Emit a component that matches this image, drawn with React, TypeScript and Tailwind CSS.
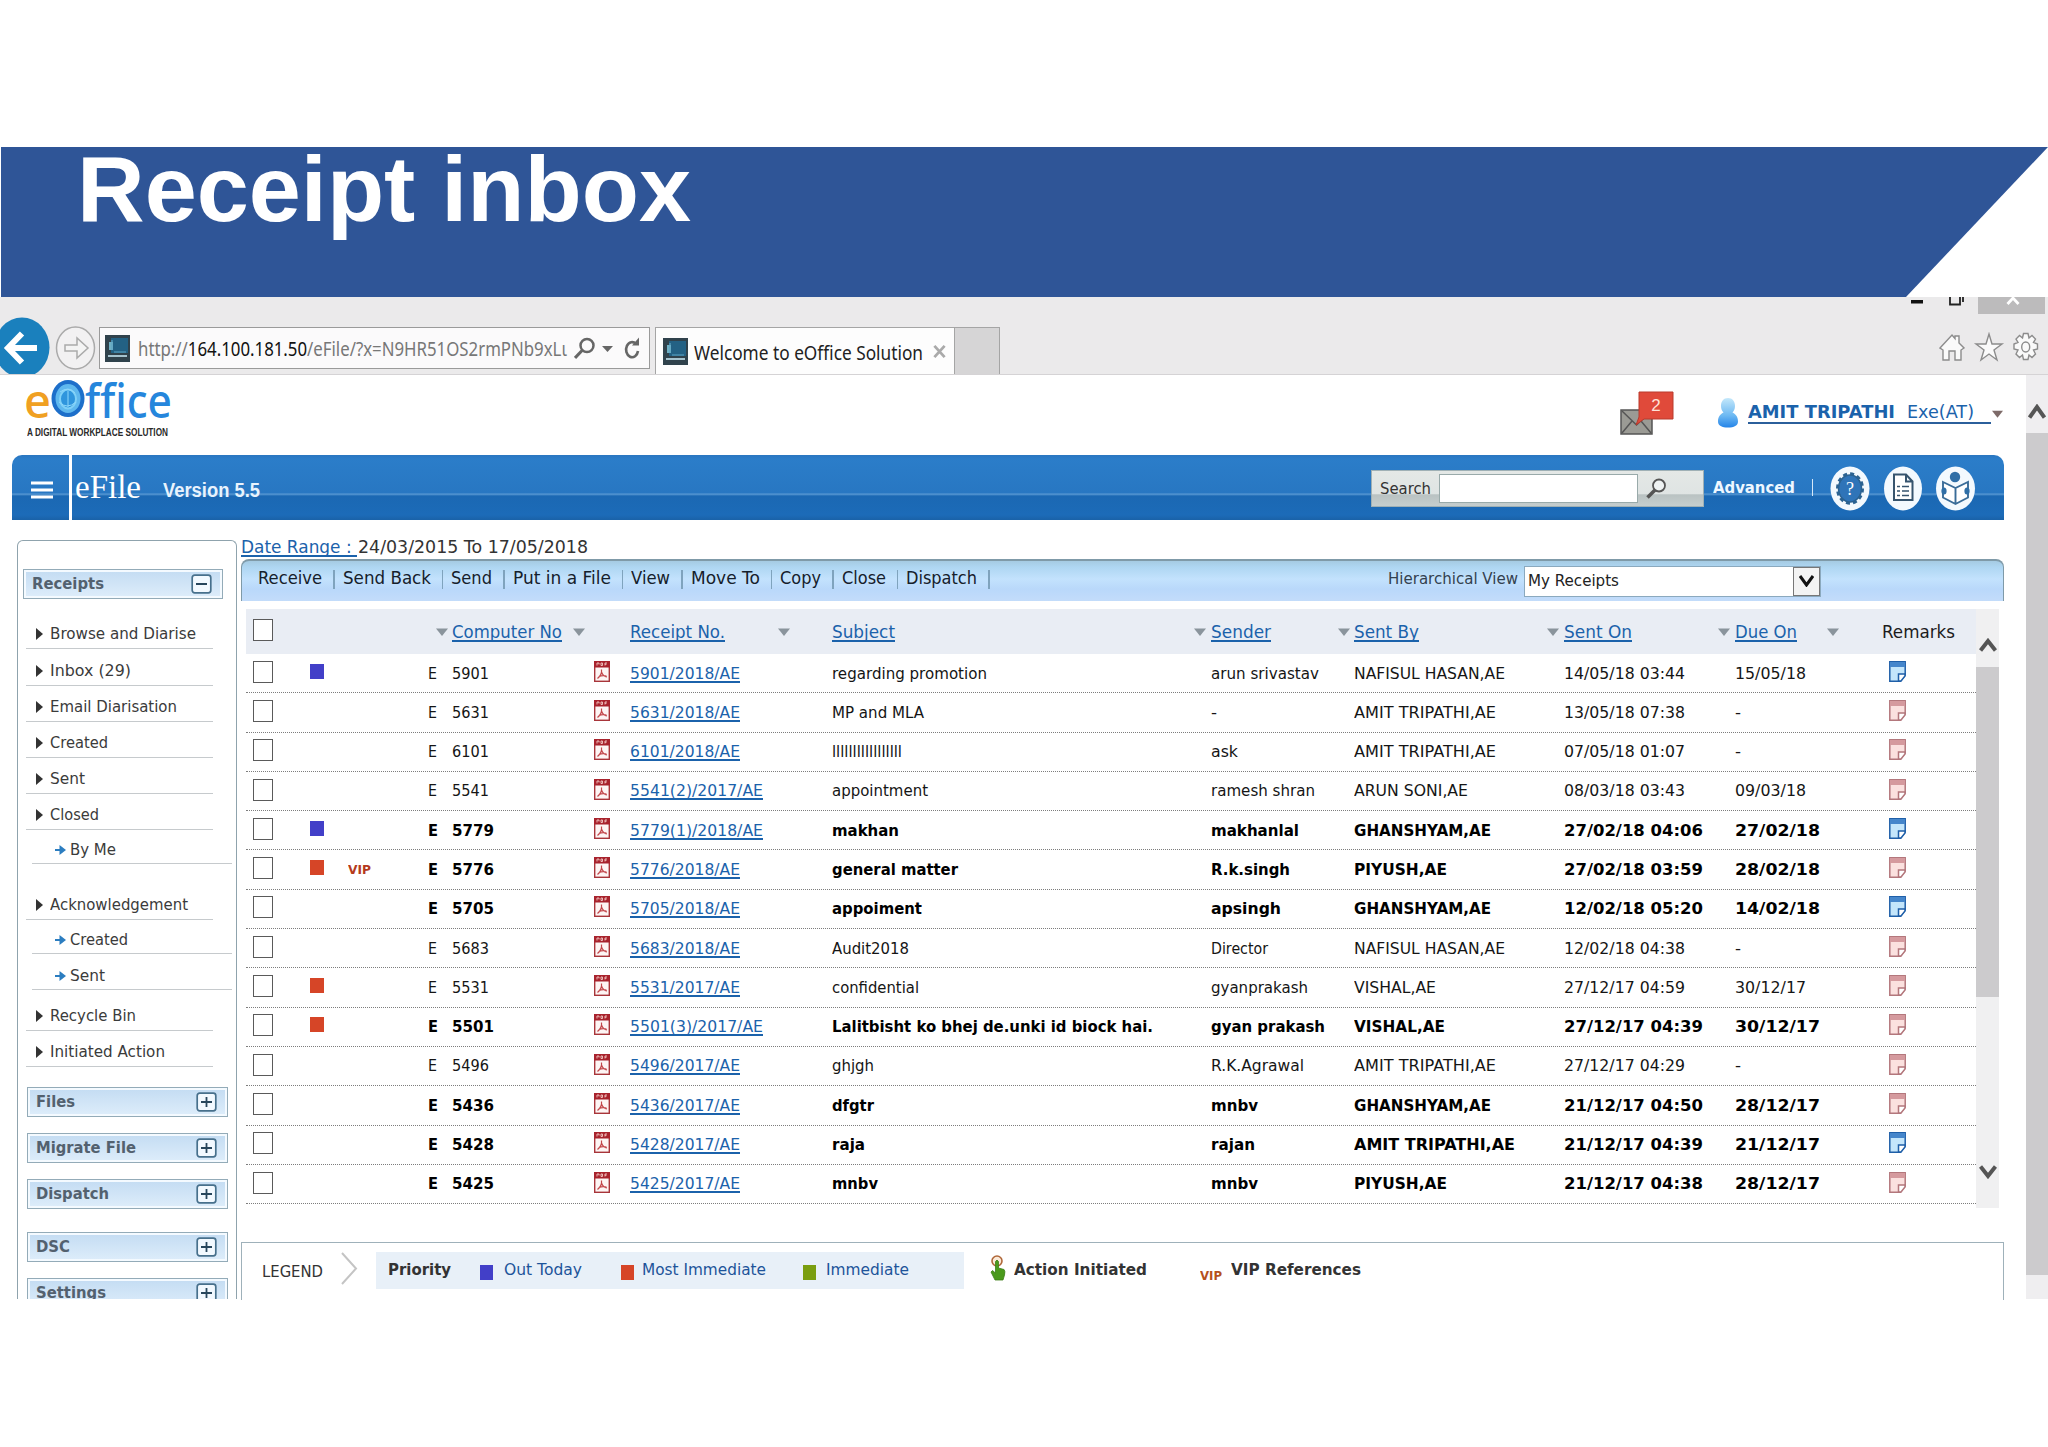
import React, { useLayoutEffect, useRef, useState } from "react";

/** Text squeezed or stretched horizontally so that it takes exactly `w` pixels. */
function Fit({ w, link = false, className = "", children }: { w: number; link?: boolean; className?: string; children: React.ReactNode }) {
  const ref = useRef<HTMLSpanElement>(null);
  const [scale, setScale] = useState(1);
  useLayoutEffect(() => {
    if (ref.current && ref.current.offsetWidth) setScale(w / ref.current.getBoundingClientRect().width);
  }, [w]);
  return (
    <span className={"inline-block shrink-0 whitespace-nowrap " + className} style={{ width: w }}>
      <span ref={ref} className={"inline-block origin-left whitespace-pre " + (link ? LINK : "")} style={{ transform: `scaleX(${scale})` }}>
        {children}
      </span>
    </span>
  );
}

const LINK = "text-[#1b62ab] underline underline-offset-[2px] decoration-[1.5px] [text-decoration-skip-ink:none]";

function Caret({ className = "" }: { className?: string }) {
  return (
    <svg className={"h-[8px] w-[12px] shrink-0 " + className} viewBox="0 0 12 8">
      <path d="M0 0.5H12L6 8Z" fill="#8a949c" />
    </svg>
  );
}

function Favicon() {
  return (
    <svg className="h-[27px] w-[25px] shrink-0" viewBox="0 0 25 27">
      <rect width="25" height="27" fill="#30424c" />
      <rect x="6" y="3" width="17" height="15" fill="#236184" />
      <rect x="4" y="7" width="4" height="8" fill="#6fb0c4" />
      <path d="M7 5v10M9 17h12" stroke="#5fa5c4" strokeWidth="1.2" />
      <rect x="3" y="20" width="19" height="2" fill="#a5c3cf" />
    </svg>
  );
}

function Banner() {
  return (
    <div className="ml-px mt-[147px] h-[150px] shrink-0 bg-[#2f5597] pl-[76px] [clip-path:polygon(0_0,100%_0,1905px_100%,0_100%)]">
      <div className="-mt-[11px] font-['Liberation_Sans',sans-serif] text-[93px] font-bold leading-[107px] text-white">
        <Fit w={614}>Receipt inbox</Fit>
      </div>
    </div>
  );
}

function BrowserBar() {
  return (
    <div className="flex h-[78px] shrink-0 overflow-hidden border-b border-[#d5d3d5] bg-[#ebeaeb] font-['Noto_Sans',sans-serif]">
      <svg className="h-[77px] w-[99px] shrink-0" viewBox="0 0 99 77">
        <ellipse cx="22" cy="50.500" rx="27.500" ry="30" fill="#1a80bd" />
        <path d="M37 51H9M22 36.500L8 51L22 65.500" fill="none" stroke="#fff" strokeWidth="6" />
        <ellipse cx="75.500" cy="51" rx="19" ry="21" fill="#f2f1f2" stroke="#aaa" strokeWidth="1.500" />
        <path d="M65 48h12v-7l11 10l-11 10v-7h-12z" fill="#f4f4f4" stroke="#aaa" strokeWidth="1.500" />
      </svg>
      <div className="mt-[30px] flex h-[42px] w-[551px] shrink-0 items-center border border-[#9a9a9a] bg-[#fbfafb] pl-[5px]">
        <Favicon />
        <div className="ml-[8px] mt-[2px] text-[19px] text-[#777]">
          <Fit w={429}>
            http://<span className="text-[#111]">164.100.181.50</span>/eFile/?x=N9HR51OS2rmPNb9xLι
          </Fit>
        </div>
        <svg className="ml-[7px] mt-[2px] h-[26px] w-[70px] shrink-0" viewBox="0 0 70 26">
          <circle cx="13" cy="9.500" r="6.500" fill="none" stroke="#666" strokeWidth="2.500" />
          <path d="M8.500 14L1 22" stroke="#666" strokeWidth="3" />
          <path d="M28 10H39L33.500 16Z" fill="#666" />
          <path d="M62 8A6 7.500 0 1 0 64 15" fill="none" stroke="#666" strokeWidth="2.600" />
          <path d="M58 9.500H65V1.500Z" fill="#666" />
        </svg>
      </div>
      <div className="ml-[5px] mt-[30px] flex h-[48px] w-[300px] shrink-0 items-center border border-b-0 border-[#a5a5a5] bg-[#fdfdfd] pl-[7px]">
        <Favicon />
        <Fit w={229} className="ml-[6px] mt-[3px] text-[19px] text-[#222]">Welcome to eOffice Solution</Fit>
        <svg className="ml-[10px] h-[13px] w-[13px]" viewBox="0 0 13 14">
          <path d="M1 1L12 13M12 1L1 13" stroke="#aaa" strokeWidth="3" />
        </svg>
      </div>
      <div className="mt-[30px] h-[48px] w-[45px] shrink-0 border border-l-0 border-[#a5a5a5] bg-[#d6d5d6]" />
      <div className="ml-auto flex w-[140px] flex-col">
        <svg className="h-[17px] w-[140px]" viewBox="0 0 140 17">
          <rect x="3" y="3" width="12" height="3.500" fill="#111" />
          <path d="M42 0V7.500H52V0M55 0V5" fill="none" stroke="#222" strokeWidth="1.800" />
          <rect x="70" y="0" width="67" height="17" fill="#bcbbbc" />
          <path d="M99.500 7L105 1L110.500 7" fill="none" stroke="#fff" strokeWidth="2.800" />
        </svg>
        <svg className="mt-[18px] h-[32px] w-[140px]" viewBox="0 0 140 32" fill="#fafafa" stroke="#8c8c8c" strokeWidth="1.400">
          <path d="M32 16L44 3L47 6.500V4H51V11L56 16L53 18V28H47V19H41V28H35V18Z" />
          <path d="M81 2L84 12H94L86 18L89 28L81 22L73 28L76 18L68 12H78Z" />
          <path d="M115.500 1.500h4.500l1 4.500l3-2.500l3.500 3.500l-2 3.500l4 1.500v5l-4 1l2 4l-3.500 3.500l-3-2.500l-1 4.500h-4.500l-1-4.500l-3 2.500l-3.500-3.500l2-4l-4-1v-5l4-1.500l-2-3.500l3.500-3.500l3 2.500z" />
          <ellipse cx="117.700" cy="15" rx="4" ry="5" />
        </svg>
      </div>
    </div>
  );
}

function Logo() {
  return (
    <div className="ml-[24px] flex w-[150px] shrink-0 flex-col">
      <div className="flex h-[48px] items-start font-['Noto_Sans',sans-serif] text-[47px] leading-[50px]">
        <Fit w={27} className="font-medium text-[#f0a022]">e</Fit>
        <svg className="mt-[5px] h-[37px] w-[34px] shrink-0" viewBox="0 0 34 37">
          <ellipse cx="17" cy="18.500" rx="14.500" ry="16.500" fill="#5fb8ee" stroke="#1d6fca" strokeWidth="4" />
          <ellipse cx="17" cy="19" rx="8" ry="9.500" fill="#2f95dd" stroke="#7fd0f7" strokeWidth="2" />
          <path d="M9 12q8-6 15 1M8 22q8 8 17 0M17 11v16" fill="none" stroke="#8fd8fb" strokeWidth="1" />
        </svg>
        <Fit w={87} className="font-medium text-[#2586dc]">ffice</Fit>
      </div>
      <div className="ml-[3px] mt-[2px] font-['Liberation_Sans',sans-serif] text-[10.5px] font-bold leading-[14px] text-[#2a2a2a]">
        <Fit w={141}>A DIGITAL WORKPLACE SOLUTION</Fit>
      </div>
    </div>
  );
}

function TopStrip() {
  return (
    <div className="flex h-[80px] shrink-0">
      <Logo />
      <svg className="ml-auto mt-[16px] h-[44px] w-[54px] shrink-0" viewBox="0 0 54 44">
        <rect x="1" y="19" width="31" height="24" fill="#9b9b95" stroke="#555" strokeWidth="1.500" />
        <path d="M2 20L16.500 34L31 20M2 42L12 30M31 42L21 30" fill="none" stroke="#555" strokeWidth="1.500" />
        <path d="M19 1H53V28H24L16 34L19 26Z" fill="#e04a3a" stroke="#b93a2c" />
        <text x="36" y="20" textAnchor="middle" fontSize="17" fontFamily="Liberation Sans, sans-serif" fill="#ffe3d8">2</text>
      </svg>
      <svg className="ml-[43px] mt-[22px] h-[32px] w-[22px] shrink-0" viewBox="0 0 22 32">
        <defs>
          <linearGradient id="person" x1="0" y1="0" x2="0" y2="1">
            <stop offset="0" stopColor="#c4e8fb" />
            <stop offset=".6" stopColor="#6cb8f2" />
            <stop offset="1" stopColor="#2584e8" />
          </linearGradient>
        </defs>
        <path d="M11 1c4.500 0 7 3.500 7 8c0 3-1 5-2.500 6.500c4 2 5.500 5 5.500 9c0 4-4 6-10 6s-10-2-10-6c0-4 1.500-7 5.500-9C5 14 4 12 4 9c0-4.500 2.500-8 7-8z" fill="url(#person)" />
      </svg>
      <div className="ml-[9px] mt-[25px] flex h-[24px] w-[243px] shrink-0 items-end border-b-2 border-[#2b5f9b] font-['DejaVu_Sans',sans-serif] text-[17px] leading-[20px] text-[#1b62ab]">
        <Fit w={147} className="font-bold">AMIT TRIPATHI</Fit>
        <Fit w={67} className="ml-[12px]">Exe(AT)</Fit>
      </div>
      <svg className="ml-px mr-[23px] mt-[35px] h-[8px] w-[11px] shrink-0" viewBox="0 0 12 8"><path d="M0 .5H12L6 8Z" fill="#7d6a68" /></svg>
    </div>
  );
}

function EFileBar() {
  return (
    <div className="ml-[12px] flex h-[65px] w-[1992px] shrink-0 items-center rounded-t-[10px] bg-[linear-gradient(to_bottom,#2a76c0_0,#2b7dc9_4px,#2877c2_38px,#5c9bd5_39px,#1b68b3_41px,#1c6bb8_60px,#1a62a8_100%)]">
      <svg className="ml-[19px] mt-[5px] h-[18px] w-[22px] shrink-0" viewBox="0 0 22 18">
        <path d="M0 2H22M0 9H22M0 16H22" stroke="#fff" strokeWidth="3.200" />
      </svg>
      <div className="ml-[16px] h-full w-[3px] shrink-0 bg-white" />
      <div className="ml-[3px] font-['Liberation_Serif',serif] text-[33px] text-white">
        <Fit w={66}>eFile</Fit>
      </div>
      <div className="ml-[22px] mt-[4px] font-['Liberation_Sans',sans-serif] text-[20px] font-bold text-[#e8f3fd]">
        <Fit w={97}>Version 5.5</Fit>
      </div>
      <div className="ml-auto mt-[2px] flex h-[37px] w-[333px] shrink-0 items-center border border-[#9fb0b5] bg-[linear-gradient(to_bottom,#e4e8e6,#dfe4e3_65%,#b9c2c2_68%,#c6cece)] pl-[8px] font-['DejaVu_Sans',sans-serif] text-[16px] text-[#333]">
        <Fit w={51}>Search</Fit>
        <div className="ml-[8px] h-[29px] w-[199px] shrink-0 border border-[#9aa] bg-white" />
        <svg className="ml-[8px] h-[22px] w-[21px]" viewBox="0 0 21 22">
          <circle cx="13" cy="7.500" r="6" fill="#eef2f2" stroke="#555" strokeWidth="1.800" />
          <path d="M9 12L1.500 19.500" stroke="#555" strokeWidth="3.500" />
        </svg>
      </div>
      <div className="ml-[9px] mt-[1px] font-['DejaVu_Sans',sans-serif] text-[16px] font-bold text-[#eef7ff]">
        <Fit w={82}>Advanced</Fit>
      </div>
      <div className="ml-[17px] mr-[17px] h-[17px] w-[1.5px] bg-[#d5e8f8]" />
      <svg className="mr-[26px] mt-[2px] h-[46px] w-[148px] shrink-0" viewBox="0 0 148 46">
        <g fill="#f3f9fe">
          <ellipse cx="20" cy="22.500" rx="19.500" ry="22" />
          <ellipse cx="73" cy="22.500" rx="19" ry="22" />
          <ellipse cx="125.500" cy="22.500" rx="19.500" ry="22" />
        </g>
        <ellipse cx="20" cy="22.500" rx="11.500" ry="13.500" fill="#2f74b8" stroke="#2b6291" strokeWidth="1.500" />
        <ellipse cx="20" cy="22.500" rx="12.500" ry="14.700" fill="none" stroke="#2b6291" strokeWidth="3" strokeDasharray="4 3.100" />
        <text x="20" y="29" textAnchor="middle" fontSize="18" fontFamily="Liberation Serif, serif" fill="#fff">?</text>
        <path d="M64 8.500H76L82.500 15.500V34H64Z M76 8.500V15.500H82.500" fill="#fff" stroke="#36546e" strokeWidth="2" />
        <path d="M67 20.500H70M72 20.500H79M67 25H70M72 25H79M67 29.500H70M72 29.500H79" stroke="#36546e" strokeWidth="1.600" />
        <circle cx="125" cy="11" r="5.200" fill="#2f6ea6" />
        <path d="M113 16L125.500 22L138 16V31.500L125.500 38L113 31.500ZM125.500 22V38" fill="#fff" stroke="#3a6c98" strokeWidth="1.900" />
        <ellipse cx="114" cy="25" rx="2.600" ry="3.500" fill="#2f6ea6" />
        <ellipse cx="137" cy="25" rx="2.600" ry="3.500" fill="#2f6ea6" />
      </svg>
    </div>
  );
}

function SectionHeader({ label, w, open = false, className = "" }: { label: string; w: number; open?: boolean; className?: string }) {
  return (
    <div className={"flex h-[30px] shrink-0 items-center justify-between border border-[#93abb8] bg-[#f4faff] p-[2px] " + className}>
      <div className="flex h-full w-full items-center justify-between bg-[linear-gradient(to_bottom,#c5ddf3,#dcecfa)] pl-[6px] pr-[8px] font-['DejaVu_Sans',sans-serif] text-[15.5px] font-bold text-[#53616f]">
        <Fit w={w} className="mt-[1px]">{label}</Fit>
        <svg className="h-[20px] w-[21px]" viewBox="0 0 21 20">
          <rect x="1.200" y="1.200" width="18.600" height="17.600" rx="2.500" fill="#f2f9ff" stroke="#47708c" strokeWidth="1.700" />
          <path d={open ? "M5 10H16" : "M5 10H16M10.500 5V15"} stroke="#27465c" strokeWidth="1.800" />
        </svg>
      </div>
    </div>
  );
}

function Item({ label, w, className }: { label: string; w: number; className: string }) {
  return (
    <div className={"ml-[8px] flex w-[187px] shrink-0 items-end border-b border-[#c6cacd] pl-[10px] " + className}>
      <svg className="mb-[8px] h-[12px] w-[7px] shrink-0" viewBox="0 0 7 12"><path d="M0 0L7 6L0 12Z" fill="#333" /></svg>
      <Fit w={w} className="ml-[7px] leading-[28px]">{label}</Fit>
    </div>
  );
}

function SubItem({ label, w, className }: { label: string; w: number; className: string }) {
  return (
    <div className={"ml-[14px] flex w-[200px] shrink-0 items-end border-b border-[#c6cacd] pl-[23px] " + className}>
      <svg className="mb-[8px] h-[10px] w-[11px] shrink-0" viewBox="0 0 11 10"><path d="M0 5H6" stroke="#2b7dc0" strokeWidth="2" /><path d="M4.500 0L11 5L4.500 10Z" fill="#2b7dc0" /></svg>
      <Fit w={w} className="ml-[4px] leading-[26px]">{label}</Fit>
    </div>
  );
}

function Sidebar() {
  return (
    <div className="ml-[17px] mt-[20px] flex h-[759px] w-[220px] shrink-0 flex-col overflow-hidden rounded-t-[6px] border-x-[1.5px] border-t-[1.5px] border-[#8fa3ad] font-['DejaVu_Sans',sans-serif] text-[15.5px] text-[#3b3b3b]">
      <SectionHeader label="Receipts" w={72} open className="ml-[5px] mt-[28px] w-[200px]" />
      <Item label="Browse and Diarise" w={146} className="h-[50px]" />
      <Item label="Inbox (29)" w={81} className="h-[37px]" />
      <Item label="Email Diarisation" w={127} className="h-[36px]" />
      <Item label="Created" w={58} className="h-[36px]" />
      <Item label="Sent" w={35} className="h-[36px]" />
      <Item label="Closed" w={49} className="h-[36px]" />
      <SubItem label="By Me" w={46} className="h-[34px]" />
      <Item label="Acknowledgement" w={138} className="h-[56px]" />
      <SubItem label="Created" w={58} className="h-[34px]" />
      <SubItem label="Sent" w={35} className="h-[36px]" />
      <Item label="Recycle Bin" w={86} className="h-[41px]" />
      <Item label="Initiated Action" w={115} className="h-[36px]" />
      <SectionHeader label="Files" w={39} className="ml-[9px] mt-[20px] w-[201px]" />
      <SectionHeader label="Migrate File" w={100} className="ml-[9px] mt-[16px] w-[201px]" />
      <SectionHeader label="Dispatch" w={73} className="ml-[9px] mt-[16px] w-[201px]" />
      <SectionHeader label="DSC" w={34} className="ml-[9px] mt-[23px] w-[201px]" />
      <SectionHeader label="Settings" w={70} className="ml-[9px] mt-[16px] w-[201px]" />
    </div>
  );
}

const ACTIONS: [string, number][] = [
  ["Receive", 64], ["Send Back", 88], ["Send", 41], ["Put in a File", 98], ["View", 39],
  ["Move To", 69], ["Copy", 41], ["Close", 44], ["Dispatch", 71],
];

function Toolbar() {
  return (
    <div className="flex h-[42px] w-[1763px] shrink-0 items-center rounded-t-[8px] border-x border-t-2 border-[#7f9aa8] bg-[linear-gradient(to_bottom,#a5cbe3_0,#aed6f2_6px,#c3e2fd_18px,#b9d8fa_28px,#c3dcfa_100%)] pl-[16px] font-['DejaVu_Sans',sans-serif] text-[17px] text-[#15202b]">
      {ACTIONS.map(([label, w]) => (
        <div key={label} className="-mt-[4px] mr-[8px] flex items-center">
          <Fit w={w}>{label}</Fit>
          <div className="ml-[11px] h-[19px] w-[1.5px] bg-[#7fa3bd]" />
        </div>
      ))}
      <div className="ml-auto -mt-[2px] text-[15.5px] text-[#33414f]">
        <Fit w={130}>Hierarchical View</Fit>
      </div>
      <div className="ml-[6px] mr-[182px] flex h-[31px] w-[297px] items-center border border-[#8ba9be] bg-white pl-[3px] text-[15.5px] text-[#222]">
        <Fit w={91} className="mt-[2px]">My Receipts</Fit>
        <div className="ml-auto flex h-[29px] w-[27px] items-center justify-center border border-[#777] bg-[#f3f3f3]">
          <svg className="h-[12px] w-[15px]" viewBox="0 0 15 12"><path d="M1 1L7.500 10L14 1" fill="none" stroke="#111" strokeWidth="3" /></svg>
        </div>
      </div>
    </div>
  );
}

const GRID =
  "grid w-[1730px] shrink-0 grid-cols-[64px_38px_80px_24px_142px_36px_202px_379px_143px_210px_171px_154px_87px] items-center pt-[2px]";

function Checkbox() {
  return <div className="ml-[7px] h-[22px] w-[20px] border-[1.5px] border-[#5a5a5a] bg-white" />;
}

function HeaderRow() {
  return (
    <div className={GRID + " h-[45px] bg-[#e9edf4] font-['DejaVu_Sans',sans-serif] text-[17px]"}>
      <div className="-mt-[5px]"><Checkbox /></div>
      <div />
      <div />
      <Caret className="-mt-[2px] ml-[8px]" />
      <div className="flex items-center"><Fit w={110} link>Computer No</Fit><Caret className="-mt-[2px] ml-[11px]" /></div>
      <div />
      <div className="flex items-center"><Fit w={95} link>Receipt No.</Fit><Caret className="-mt-[2px] ml-[53px]" /></div>
      <div className="flex items-center"><Fit w={63} link>Subject</Fit><Caret className="-mt-[2px] ml-auto mr-[5px]" /></div>
      <div className="flex items-center"><Fit w={60} link>Sender</Fit><Caret className="-mt-[2px] ml-auto mr-[4px]" /></div>
      <div className="flex items-center"><Fit w={65} link>Sent By</Fit><Caret className="-mt-[2px] ml-auto mr-[5px]" /></div>
      <div className="flex items-center"><Fit w={68} link>Sent On</Fit><Caret className="-mt-[2px] ml-auto mr-[5px]" /></div>
      <div className="flex items-center"><Fit w={62} link>Due On</Fit><Caret className="-mt-[2px] ml-[30px]" /></div>
      <div className="-ml-[7px] text-[#1c1c1c]"><Fit w={73}>Remarks</Fit></div>
    </div>
  );
}

type Row = {
  p?: "blue" | "red"; vip?: boolean; b?: boolean; no: string; rec: string;
  subj: string; sw: number; from: string; fw: number; by: string; bw: number; on: string; due: string; note?: boolean;
};

const ROWS: Row[] = [
  { p: "blue", no: "5901", rec: "5901/2018/AE", subj: "regarding promotion", sw: 155, from: "arun srivastav", fw: 108, by: "NAFISUL HASAN,AE", bw: 151, on: "14/05/18 03:44", due: "15/05/18", note: true },
  { no: "5631", rec: "5631/2018/AE", subj: "MP and MLA", sw: 92, from: "-", fw: 6, by: "AMIT TRIPATHI,AE", bw: 142, on: "13/05/18 07:38", due: "-" },
  { no: "6101", rec: "6101/2018/AE", subj: "lllllllllllllllll", sw: 70, from: "ask", fw: 27, by: "AMIT TRIPATHI,AE", bw: 142, on: "07/05/18 01:07", due: "-" },
  { no: "5541", rec: "5541(2)/2017/AE", subj: "appointment", sw: 96, from: "ramesh shran", fw: 104, by: "ARUN SONI,AE", bw: 114, on: "08/03/18 03:43", due: "09/03/18" },
  { p: "blue", b: true, no: "5779", rec: "5779(1)/2018/AE", subj: "makhan", sw: 67, from: "makhanlal", fw: 88, by: "GHANSHYAM,AE", bw: 137, on: "27/02/18 04:06", due: "27/02/18", note: true },
  { p: "red", vip: true, b: true, no: "5776", rec: "5776/2018/AE", subj: "general matter", sw: 126, from: "R.k.singh", fw: 79, by: "PIYUSH,AE", bw: 93, on: "27/02/18 03:59", due: "28/02/18" },
  { b: true, no: "5705", rec: "5705/2018/AE", subj: "appoiment", sw: 90, from: "apsingh", fw: 70, by: "GHANSHYAM,AE", bw: 137, on: "12/02/18 05:20", due: "14/02/18", note: true },
  { no: "5683", rec: "5683/2018/AE", subj: "Audit2018", sw: 77, from: "Director", fw: 57, by: "NAFISUL HASAN,AE", bw: 151, on: "12/02/18 04:38", due: "-" },
  { p: "red", no: "5531", rec: "5531/2017/AE", subj: "confidential", sw: 87, from: "gyanprakash", fw: 97, by: "VISHAL,AE", bw: 82, on: "27/12/17 04:59", due: "30/12/17" },
  { p: "red", b: true, no: "5501", rec: "5501(3)/2017/AE", subj: "Lalitbisht ko bhej de.unki id biock hai.", sw: 321, from: "gyan prakash", fw: 114, by: "VISHAL,AE", bw: 91, on: "27/12/17 04:39", due: "30/12/17" },
  { no: "5496", rec: "5496/2017/AE", subj: "ghjgh", sw: 42, from: "R.K.Agrawal", fw: 93, by: "AMIT TRIPATHI,AE", bw: 142, on: "27/12/17 04:29", due: "-" },
  { b: true, no: "5436", rec: "5436/2017/AE", subj: "dfgtr", sw: 42, from: "mnbv", fw: 47, by: "GHANSHYAM,AE", bw: 137, on: "21/12/17 04:50", due: "28/12/17" },
  { b: true, no: "5428", rec: "5428/2017/AE", subj: "raja", sw: 33, from: "rajan", fw: 44, by: "AMIT TRIPATHI,AE", bw: 161, on: "21/12/17 04:39", due: "21/12/17", note: true },
  { b: true, no: "5425", rec: "5425/2017/AE", subj: "mnbv", sw: 46, from: "mnbv", fw: 47, by: "PIYUSH,AE", bw: 93, on: "21/12/17 04:38", due: "28/12/17" },
];

function PdfIcon() {
  return (
    <svg className="-mt-[6px] h-[21px] w-[16px]" viewBox="0 0 16 21">
      <rect x=".7" y=".7" width="14.600" height="19.600" fill="#fdf5f4" stroke="#a8353a" strokeWidth="1.400" />
      <rect width="16" height="6.500" fill="#a8232d" />
      <path d="M3 4.500V2H5V3.500M7 2V4.500H8.500V2ZM11 4.500V2H13M11 3.300H12.500" stroke="#f3c9c6" strokeWidth=".9" fill="none" />
      <path d="M7.500 8.500C8 12 6.500 15 3.500 17.500M7.500 11C8.500 14 10 15.500 13 16M5 15.500C8 14.300 10 14.500 12.500 15" stroke="#c2464a" strokeWidth="1.200" fill="none" />
    </svg>
  );
}

function NoteIcon({ blue }: { blue?: boolean }) {
  const line = blue ? "#1f5fa8" : "#b3777c";
  return (
    <svg className="-mt-[6px] h-[21px] w-[17px]" viewBox="0 0 17 21">
      <path d="M.8 .8H16.200V14L11.500 20.200H.8Z" fill={blue ? "#c4e6fb" : "#fbe1df"} stroke={line} strokeWidth="1.500" />
      <rect x="1" y="1" width="15" height="5" fill={blue ? "#4586cb" : "#d59a9e"} />
      <path d="M9.500 20V13H16V15L12 20Z" fill="#fff" stroke={line} strokeWidth="1.500" />
    </svg>
  );
}

function TableRow({ r }: { r: Row }) {
  return (
    <div
      className={
        GRID +
        " h-[39.3px] border-b border-dotted border-[#7d7d7d] font-['DejaVu_Sans',sans-serif] text-[15.5px] " +
        (r.b ? "font-bold text-black" : "text-[#151515]")
      }
    >
      <div className="-mt-[5px]"><Checkbox /></div>
      <div>{r.p && <div className={"-mt-[6px] h-[15px] w-[14px] " + (r.p === "blue" ? "bg-[#423fc8]" : "bg-[#d64527]")} />}</div>
      <div className="text-[11.5px] font-bold leading-none text-[#b53a1c]">{r.vip && <Fit w={23}>VIP</Fit>}</div>
      <Fit w={r.b ? 10 : 9}>E</Fit>
      <Fit w={r.b ? 42 : 37}>{r.no}</Fit>
      <PdfIcon />
      <Fit w={r.rec.length > 12 ? 133 : 110} link className="font-normal">{r.rec}</Fit>
      <Fit w={r.sw}>{r.subj}</Fit>
      <Fit w={r.fw}>{r.from}</Fit>
      <Fit w={r.bw}>{r.by}</Fit>
      <Fit w={r.b ? 139 : 121}>{r.on}</Fit>
      <Fit w={r.due === "-" ? 6 : r.b ? 85 : 71}>{r.due}</Fit>
      <NoteIcon blue={r.note} />
    </div>
  );
}

function Legend() {
  return (
    <div className="mt-[34px] flex h-[58px] w-[1763px] shrink-0 items-start border-x-[1.5px] border-t-[1.5px] border-[#9fb1ba] font-['DejaVu_Sans',sans-serif] text-[15.5px]">
      <div className="ml-[20px] mt-[18px] text-[#333]"><Fit w={61} className="text-[15px]">LEGEND</Fit></div>
      <svg className="ml-[18px] mt-[9px] h-[33px] w-[17px]" viewBox="0 0 17 33"><path d="M1 1L15 16.500L1 32" fill="none" stroke="#c4c4c4" strokeWidth="2" /></svg>
      <div className="ml-[18px] mt-[9px] flex h-[37px] w-[588px] items-center bg-[#e8f0f8] pl-[12px] text-[#1d549a]">
        <Fit w={63} className="font-bold text-[#333]">Priority</Fit>
        <div className="ml-[29px] mt-[4px] h-[15px] w-[13px] bg-[#423fc8]" />
        <Fit w={78} className="ml-[11px]">Out Today</Fit>
        <div className="ml-[39px] mt-[4px] h-[15px] w-[13px] bg-[#d64527]" />
        <Fit w={124} className="ml-[8px]">Most Immediate</Fit>
        <div className="ml-[37px] mt-[4px] h-[15px] w-[13px] bg-[#7a9e10]" />
        <Fit w={83} className="ml-[10px]">Immediate</Fit>
      </div>
      <svg className="ml-[26px] mt-[12px] h-[26px] w-[16px]" viewBox="0 0 16 26">
        <circle cx="7" cy="6" r="5" fill="#fbead8" stroke="#b0683a" strokeWidth="1.600" />
        <path d="M5.500 6.500Q7 3.500 8.500 6.500V13L14 14.500Q15.500 16 14.500 20L13 25H5L1 17L2.500 15.500L5.500 18Z" fill="#4a9a1c" stroke="#3c7f18" strokeWidth=".8" />
      </svg>
      <Fit w={133} className="ml-[8px] mt-[16px] font-bold text-[#333]">Action Initiated</Fit>
      <div className="ml-[53px] mt-[28px] text-[11.5px] font-bold leading-none text-[#b5501c]"><Fit w={22}>VIP</Fit></div>
      <Fit w={130} className="ml-[9px] mt-[16px] font-bold text-[#333]">VIP References</Fit>
    </div>
  );
}

function InnerScroll() {
  return (
    <div className="flex h-[599px] w-[23px] shrink-0 flex-col items-center bg-[#f0f0f1]">
      <svg className="mt-[29px] h-[14px] w-[18px]" viewBox="0 0 18 14"><path d="M1.500 12.500L9 3L16.500 12.500" fill="none" stroke="#555" strokeWidth="4" /></svg>
      <div className="mt-[15px] h-[330px] w-full bg-[#cccbcd]" />
      <svg className="mt-auto mb-[29px] h-[14px] w-[18px]" viewBox="0 0 18 14"><path d="M1.500 1.500L9 11L16.500 1.500" fill="none" stroke="#555" strokeWidth="4" /></svg>
    </div>
  );
}

function Main() {
  return (
    <div className="ml-[4px] flex h-[779px] w-[1763px] shrink-0 flex-col pt-[15px]">
      <div className="flex h-[24px] shrink-0 items-center pt-[2px] font-['DejaVu_Sans',sans-serif] text-[17px] text-[#333]">
        <Fit w={116} link>{"Date Range : "}</Fit>
        <Fit w={230} className="ml-[1px]">24/03/2015 To 17/05/2018</Fit>
      </div>
      <Toolbar />
      <div className="ml-[5px] mt-[8px] flex shrink-0">
        <div className="flex flex-col">
          <HeaderRow />
          {ROWS.map((r) => <TableRow key={r.no} r={r} />)}
        </div>
        <InnerScroll />
      </div>
      <Legend />
    </div>
  );
}

export default function App() {
  return (
    <div className="flex h-[1447px] w-[2048px] flex-col overflow-hidden bg-white">
      <Banner />
      <BrowserBar />
      <div className="flex h-[924px] shrink-0">
        <div className="flex w-[2026px] shrink-0 flex-col">
          <TopStrip />
          <EFileBar />
          <div className="flex">
            <Sidebar />
            <Main />
          </div>
        </div>
        <div className="flex w-[22px] flex-col items-center bg-[#efeef0]">
          <svg className="mt-[29px] h-[15px] w-[18px]" viewBox="0 0 18 15"><path d="M1.500 13.500L9 3L16.500 13.500" fill="none" stroke="#555" strokeWidth="4" /></svg>
          <div className="mt-[14px] h-[842px] w-full bg-[#cccbcd]" />
        </div>
      </div>
    </div>
  );
}
